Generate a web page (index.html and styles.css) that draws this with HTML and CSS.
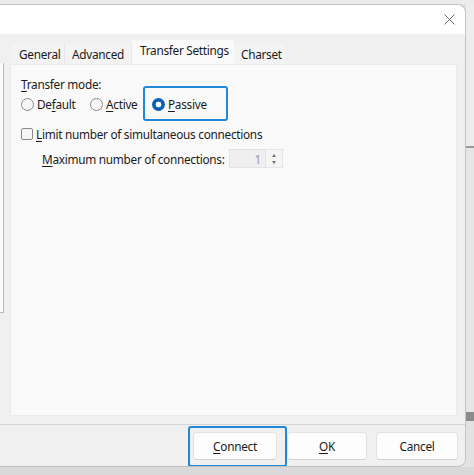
FILE: index.html
```html
<!DOCTYPE html>
<html>
<head>
<meta charset="utf-8">
<link rel="stylesheet" href="styles.css">
</head>
<body>
<div class="screen">
  <div class="top-strip"></div>
  <div class="middle">
    <div class="dialog">
      <div class="titlebar">
        <svg class="close" width="11" height="11" viewBox="0 0 11 11"><path d="M0.5 0.5 L10.5 10.5 M10.5 0.5 L0.5 10.5" stroke="#6a6a6a" stroke-width="1" fill="none"/></svg>
      </div>
      <div class="body">
        <div class="main">
          <div class="leftpane"></div>
          <div class="tabs">
            <div class="tabstrip">
              <div class="tab t-general">General</div>
              <div class="tab t-advanced">Advanced</div>
              <div class="tab active t-transfer">Transfer Settings</div>
              <div class="tab t-charset">Charset</div>
            </div>
            <div class="panel">
              <div class="line"><span class="ak">T</span>ransfer mode:</div>
              <div class="radios">
                <label class="opt o-default"><span class="radio"></span><span>De<span class="ak">f</span>ault</span></label>
                <label class="opt o-active"><span class="radio"></span><span><span class="ak">A</span>ctive</span></label>
                <label class="opt passive"><span class="radio checked"></span><span><span class="ak">P</span>assive</span></label>
              </div>
              <label class="checkrow"><span class="check"></span><span><span class="ak">L</span>imit number of simultaneous connections</span></label>
              <div class="maxrow">
                <span class="maxlabel"><span class="ak">M</span>aximum number of connections:</span>
                <span class="spin"><span class="spinval">1</span></span>
                <span class="spinbtns"><span class="up"></span><span class="down"></span></span>
              </div>
            </div>
          </div>
        </div>
        <div class="footer">
          <button class="btn connect"><span class="ak">C</span>onnect</button>
          <button class="btn ok"><span class="ak">O</span>K</button>
          <button class="btn cancel">Cancel</button>
        </div>
      </div>
    </div>
    <div class="side">
      <div class="side-a"></div>
      <div class="side-line"></div>
      <div class="side-b"></div>
      <div class="side-bar"></div>
      <div class="side-c"></div>
    </div>
  </div>
  <div class="bottom-strip"></div>
</div>
</body>
</html>
```
FILE: styles.css
```css
*, *::before, *::after { box-sizing: border-box; }
html, body { margin: 0; padding: 0; }
body {
  width: 474px;
  height: 475px;
  overflow: hidden;
  background: #e4e4e4;
  font-family: "Noto Sans", "Liberation Sans", sans-serif;
  font-size: 11.8px;
  letter-spacing: -0.28px;
  color: #1b1b1b;
}
.screen { display: flex; flex-direction: column; height: 475px; }
.top-strip { height: 4px; background: #ebebeb; flex: none; }
.middle { display: flex; flex: none; height: 463px; }
.dialog {
  width: 466px;
  height: 463px;
  border-top: 1px solid #c4c4c4;
  border-right: 1px solid #c4c4c4;
  border-bottom: 1px solid #c0c0c0;
  border-radius: 0 8px 8px 0;
  background: #f0f0f0;
  display: flex;
  flex-direction: column;
  overflow: hidden;
}
.titlebar {
  height: 29px;
  background: #ffffff;
  border-radius: 0 8px 0 0;
  display: flex;
  align-items: center;
  justify-content: flex-end;
  padding-right: 10px;
  flex: none;
}
.close { display: block; }
.body { flex: 1; display: flex; flex-direction: column; }
.main { display: flex; height: 391px; border-bottom: 1px solid #d4d4d4; flex: none; }
.leftpane {
  width: 4px;
  height: 250px;
  margin-top: 29px;
  background: #fbfbfb;
  border-right: 1px solid #b8b8b8;
  border-bottom: 1px solid #b8b8b8;
}
.tabs { margin-left: 6px; width: 447px; padding-top: 6px; display: flex; flex-direction: column; }
.tabstrip { display: flex; align-items: flex-end; height: 24px; padding-left: 2px; }
.tab {
  height: 20px;
  line-height: 20px;
  background: #f3f3f3;
  padding-left: 7px;
  border-right: 1px solid #e6e6e6;
  white-space: nowrap;
}
.t-general { width: 53px; }
.t-advanced { width: 67px; }
.t-transfer { width: 102px; }
.t-charset { width: 51px; border-right: none; }
.tab.active { height: 24px; line-height: 21px; background: #f9f9f9; padding-left: 8px; border-right: none; }
.panel {
  height: 352px;
  background: #f9f9f9;
  border: 1px solid #ececec;
  padding: 11px 0 0 10px;
}
.line { height: 16px; line-height: 16px; }
.ak { text-decoration: underline; text-underline-offset: 2px; text-decoration-thickness: 1px; }
.radios { display: flex; align-items: center; height: 16px; margin-top: 4px; }
.opt { display: flex; align-items: center; gap: 3px; line-height: 16px; position: relative; }
.o-default { width: 69px; }
.o-active { width: 62px; }
.radio {
  width: 13px; height: 13px; border-radius: 50%;
  border: 1px solid #8a8a8a; background: #f6f6f6; flex: none;
}
.radio.checked {
  border: none;
  background: radial-gradient(circle, #ffffff 0 2.6px, #0a5fb4 3.2px);
}
.passive::after {
  content: "";
  position: absolute;
  left: -9px; top: -10px;
  width: 85px; height: 35px;
  border: 2px solid #2188d8;
  border-radius: 3px;
}
.checkrow { display: flex; align-items: center; gap: 3px; height: 16px; line-height: 16px; margin-top: 14px; }
.check {
  width: 12px; height: 12px; border-radius: 2px;
  border: 1px solid #8a8a8a; background: #f6f6f6; flex: none;
}
.maxrow { display: flex; align-items: center; height: 19px; margin-top: 7px; padding-left: 21px; }
.maxlabel { width: 187px; flex: none; line-height: 16px; white-space: nowrap; }
.spin {
  width: 37px; height: 19px;
  background: #efefef;
  border: 1px solid #e3e3e3;
  color: #9a9a9a;
  display: flex; align-items: center; justify-content: flex-end;
  padding-right: 4px;
}
.spinbtns {
  width: 17px; height: 19px;
  display: flex; flex-direction: column; align-items: center; justify-content: center; gap: 4px;
  background: #f5f5f5;
  border: 1px solid #e6e6e6;
  border-left: none;
}
.up { width: 0; height: 0; border-left: 2px solid transparent; border-right: 2px solid transparent; border-bottom: 3px solid #707070; }
.down { width: 0; height: 0; border-left: 2px solid transparent; border-right: 2px solid transparent; border-top: 3px solid #707070; }
.footer { display: flex; justify-content: flex-end; padding: 7px 7px 0 0; gap: 10px; }
.btn {
  height: 28px;
  background: #fdfdfd;
  border: 1px solid #e2e2e2;
  border-bottom-color: #d0d0d0;
  border-radius: 4px;
  font-family: inherit;
  font-size: 11.8px;
  letter-spacing: -0.28px;
  color: #1b1b1b;
  padding: 0;
  position: relative;
}
.connect { width: 84px; }
.ok { width: 80px; margin-right: -1px; }
.cancel { width: 82px; }
.connect::after {
  content: "";
  position: absolute;
  left: -6px; top: -7px;
  width: 99px; height: 41px;
  border: 2px solid #2188d8;
  border-radius: 3px;
}
.side { flex: 1; display: flex; flex-direction: column; }
.side-a { height: 142px; background: #ededed; }
.side-line { height: 2px; background: #9a9a9a; }
.side-b { height: 264px; background: #e6e6e6; }
.side-bar { height: 9px; background: #8c8c8c; }
.side-c { flex: 1; background: #e2e2e2; }
.bottom-strip { flex: 1; background: #d9d9d9; }
```
